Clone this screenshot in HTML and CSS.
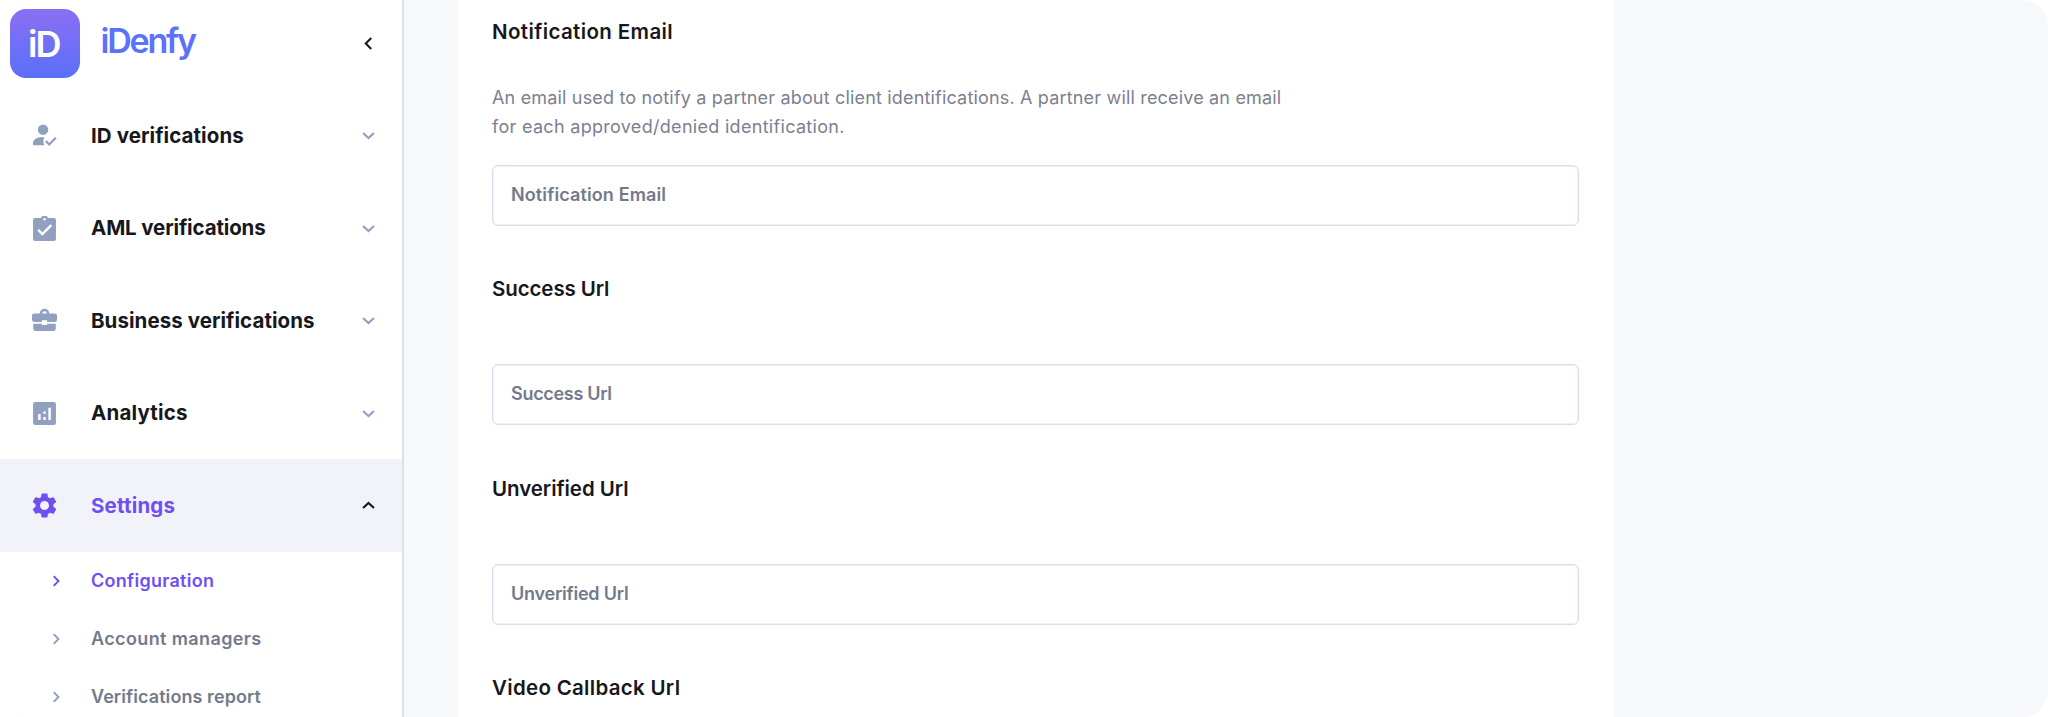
FILE: index.html
```html
<!DOCTYPE html>
<html lang="en">
<head>
<meta charset="utf-8">
<title>iDenfy – Configuration</title>
<link rel="stylesheet" href="styles.css">
</head>
<body>
<div class="app">
  <aside class="sidebar">
    <header class="brand">
      <span class="brand-mark">iD</span>
      <span class="brand-name">iDenfy</span>
      <svg class="collapse" viewBox="0 0 12 12"><path d="M8.500 1 3.500 6 8.500 11"/></svg>
    </header>
    <nav>
      <a class="item">
        <svg class="icon" viewBox="0 -2.200 24 24"><circle cx="10.600" cy="4.200" r="5"/><path d="M1 19.100v-2.300C1 13.300 5 11.400 9.800 11.400c1 0 1.500 0 2.200.2-1.500 2-1.400 4.900 0 7.500z"/><path class="tick" d="m13.300 15.200 3.200 3.200 6.400-6.400"/></svg>
        <span class="label l1">ID verifications</span>
        <svg class="chev" viewBox="0 0 12 12"><path d="M1 3.600 6 8.400 11 3.600"/></svg>
      </a>
      <a class="item">
        <svg class="icon" viewBox="0 0 24 24"><path fill-rule="evenodd" d="M3 2h5.600a3.600 3.600 0 0 1 6.800 0H21a2 2 0 0 1 2 2v18a2 2 0 0 1-2 2H3a2 2 0 0 1-2-2V4a2 2 0 0 1 2-2zm9-.2a1.200 1.200 0 1 0 0 2.400 1.200 1.200 0 0 0 0-2.400z"/><path class="cut" d="m6 13.300 4 4 8.500-8.500"/></svg>
        <span class="label l2">AML verifications</span>
        <svg class="chev" viewBox="0 0 12 12"><path d="M1 3.600 6 8.400 11 3.600"/></svg>
      </a>
      <a class="item">
        <svg class="icon" viewBox="0 0 24 24"><path fill-rule="evenodd" d="M7.500 5.200a4.500 4.500 0 0 1 9 0H22a2 2 0 0 1 2 2v4a2.300 2.300 0 0 1-2 2.200h-7.500v-1.700h-5v1.700H2A2.300 2.300 0 0 1 0 11.200v-4a2 2 0 0 1 2-2zm2.300 0h4.400a2.200 2.200 0 0 0-4.400 0z"/><path d="M1.200 15.200h8.300v1.200h5v-1.200h8.300V20a2 2 0 0 1-2 2H3.200a2 2 0 0 1-2-2z"/></svg>
        <span class="label l3">Business verifications</span>
        <svg class="chev" viewBox="0 0 12 12"><path d="M1 3.600 6 8.400 11 3.600"/></svg>
      </a>
      <a class="item">
        <svg class="icon" viewBox="0 0 24 24"><rect x="1" y="1" width="22" height="22" rx="2.200"/><path class="bars" d="M7.100 12.500v5.800M12 15.300v3M12 10v2.300M16.900 6.500v11.800"/></svg>
        <span class="label l4">Analytics</span>
        <svg class="chev" viewBox="0 0 12 12"><path d="M1 3.600 6 8.400 11 3.600"/></svg>
      </a>
      <a class="item active">
        <svg class="icon gear" viewBox="2 2 20 20"><path d="M19.140 12.940c.040-.300.060-.610.060-.940 0-.320-.020-.640-.070-.940l2.030-1.580c.180-.140.230-.410.120-.610l-1.920-3.320c-.120-.220-.370-.290-.590-.220l-2.390.960c-.500-.380-1.030-.700-1.620-.940l-.360-2.540c-.040-.240-.240-.410-.480-.410h-3.840c-.240 0-.430.170-.470.410l-.360 2.540c-.590.240-1.130.570-1.620.940l-2.390-.960c-.220-.080-.470 0-.590.220L2.740 8.870c-.120.210-.080.470.120.610l2.030 1.580c-.050.300-.090.630-.090.940s.020.640.070.940l-2.030 1.580c-.180.140-.230.410-.120.610l1.920 3.320c.120.220.370.290.590.220l2.390-.960c.500.380 1.030.700 1.620.940l.360 2.540c.050.240.240.410.480.410h3.840c.240 0 .440-.170.470-.410l.360-2.540c.590-.240 1.130-.560 1.620-.940l2.390.960c.220.080.470 0 .590-.220l1.920-3.320c.120-.220.070-.470-.120-.610l-2.010-1.580zM12 15.600c-1.980 0-3.600-1.620-3.600-3.600s1.620-3.600 3.600-3.600 3.600 1.620 3.600 3.600-1.620 3.600-3.600 3.600z"/></svg>
        <span class="label l5">Settings</span>
        <svg class="chev" viewBox="0 0 12 12"><path d="M1 8.400 6 3.600 11 8.400"/></svg>
      </a>
      <a class="sub current"><svg class="arrow" viewBox="0 0 12 12"><path d="M3.700 1.200 8.500 6 3.700 10.800"/></svg><span class="s1">Configuration</span></a>
      <a class="sub"><svg class="arrow" viewBox="0 0 12 12"><path d="M3.700 1.200 8.500 6 3.700 10.800"/></svg><span class="s2">Account managers</span></a>
      <a class="sub"><svg class="arrow" viewBox="0 0 12 12"><path d="M3.700 1.200 8.500 6 3.700 10.800"/></svg><span class="s3">Verifications report</span></a>
    </nav>
  </aside>
  <main class="content">
    <section class="card">
      <div class="field">
        <h2 class="h1">Notification Email</h2>
        <p class="help"><span class="p1">An email used to notify a partner about client identifications. A partner will receive an email</span><br><span class="p2">for each approved/denied identification.</span></p>
        <div class="input"><span class="i1">Notification Email</span></div>
      </div>
      <div class="field">
        <h2 class="h2">Success Url</h2>
        <div class="input"><span class="i2">Success Url</span></div>
      </div>
      <div class="field">
        <h2 class="h3">Unverified Url</h2>
        <div class="input"><span class="i3">Unverified Url</span></div>
      </div>
      <div class="field">
        <h2 class="h4">Video Callback Url</h2>
      </div>
    </section>
  </main>
</div>
</body>
</html>
```
FILE: styles.css
```css
* { box-sizing: border-box; }
body { margin: 0; background: #fff; font-family: Inter, "Open Sans", sans-serif; }
.app { display: flex; width: 2048px; height: 717px; overflow: hidden; border-radius: 26px; background: #f7f8fa; }
.sidebar { width: 404px; flex: none; background: #fff; border-right: 2px solid #dce1ec; }
.brand { display: flex; align-items: center; height: 89.300px; padding: 0 27px 2px 10px; }
.brand-mark { display: flex; align-items: center; justify-content: center; width: 69.500px; height: 69.500px; border-radius: 16px; background: linear-gradient(#8b6ff3, #5a6ff8); color: #fff; font-size: 36px; font-weight: 600; letter-spacing: -2px; padding-right: 2px; }
.brand-name { margin-left: 21px; margin-bottom: 5px; color: #5b72fb; font-size: 34px; line-height: 40px; font-weight: 600; letter-spacing: -2.200px; }
.collapse { width: 13px; height: 13px; margin-left: auto; color: #17181c; }
svg path, svg circle, svg rect { fill: currentColor; }
.chev path, .arrow path, .collapse path { fill: none; stroke: currentColor; stroke-width: 1.900; }
.icon .tick { fill: none; stroke: currentColor; stroke-width: 2.200; }
.icon .cut { fill: none; stroke: #fff; stroke-width: 2.400; }
.icon .bars { fill: none; stroke: #fff; stroke-width: 2.400; }
.item { display: flex; align-items: center; height: 92.550px; padding: 0 27px 0 32px; color: #91a0bf; }
.icon { width: 25px; height: 25px; flex: none; }
.label { margin-left: 34px; padding-bottom: 1px; color: #17181c; font-size: 20.500px; font-weight: 650; white-space: nowrap; }
.l1 { letter-spacing: .08px; }
.l2 { letter-spacing: -.14px; }
.l3 { letter-spacing: .06px; }
.l4, .l5 { letter-spacing: .18px; }
.chev { width: 13px; height: 13px; margin-left: auto; }
.active { background: #f2f3f8; color: #6f4ff2; }
.active .label { color: #6f4ff2; }
.active .chev { color: #17181c; }
.sub { display: flex; align-items: center; height: 58px; padding-left: 50px; color: #737a8c; font-size: 18px; font-weight: 600; white-space: nowrap; }
.sub span { padding-bottom: 2px; }
.s1 { letter-spacing: .27px; }
.s2 { letter-spacing: .38px; }
.s3 { letter-spacing: .08px; }
.arrow { width: 12px; height: 12px; margin-right: 29px; color: #91a0bf; }
.current, .current .arrow { color: #6f4ff2; }
.content { flex: 1; padding-left: 53.500px; }
.card { width: 1156px; height: 717px; padding: 16px 34.500px 0; background: #fff; }
.field { margin-bottom: 48.500px; }
.field h2 { height: 30px; margin: 0 0 60px; color: #17181c; font-size: 20.500px; line-height: 30px; font-weight: 620; white-space: nowrap; }
.field .h1 { letter-spacing: .38px; line-height: 31px; margin-bottom: 37px; }
.field .h2 { letter-spacing: -.1px; }
.field .h3 { letter-spacing: -.05px; line-height: 29px; }
.field .h4 { letter-spacing: .3px; }
.help { margin: 0 0 23.500px; color: #7b8092; font-size: 18px; line-height: 29px; white-space: nowrap; }
.p1 { letter-spacing: .175px; }
.p2 { letter-spacing: .3px; }
.input { display: flex; align-items: center; height: 61px; padding: 0 18px 2px; border: 1px solid #d9dfea; box-shadow: inset 0 0 0 1px #eef1f7; border-radius: 6px; color: #737a8c; font-size: 18px; font-weight: 600; }
.i1 { letter-spacing: .12px; }
.i2 { letter-spacing: -.3px; }
.i3 { letter-spacing: -.22px; }
```
